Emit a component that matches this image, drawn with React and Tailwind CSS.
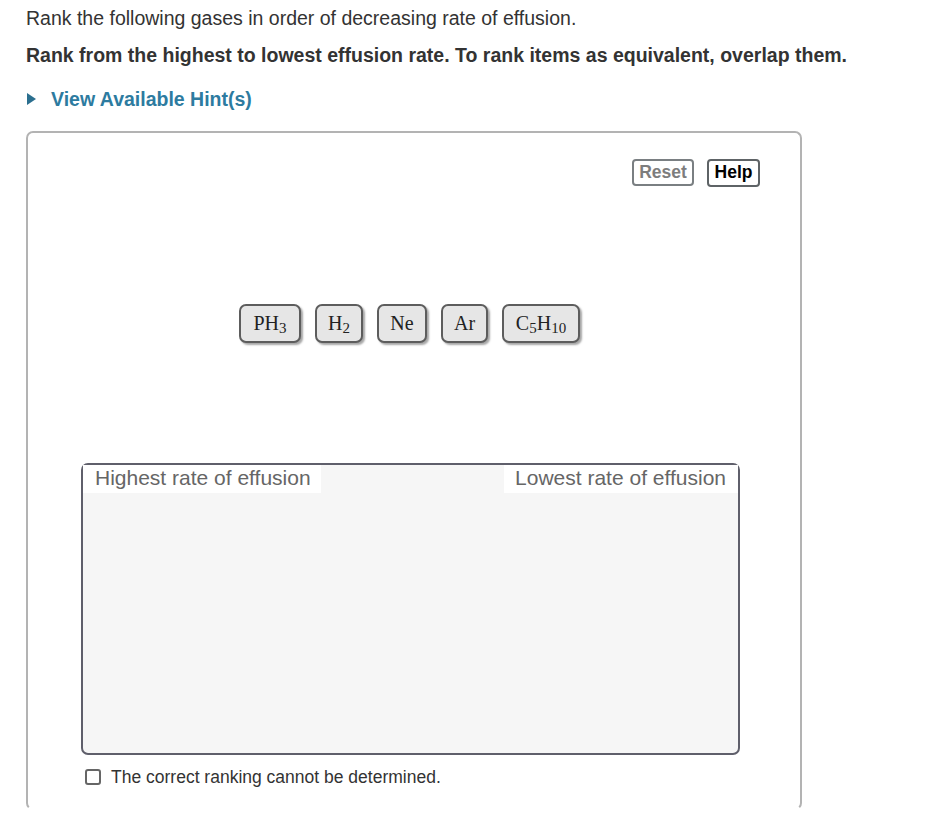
import React from 'react';

const Sub = ({ children }) => (
  <span className="relative top-[3px] text-[15px]">{children}</span>
);

const gases = [
  { key: 'ph3', w: 'w-[62px]', label: <>PH<Sub>3</Sub></> },
  { key: 'h2', w: 'w-[48px]', label: <>H<Sub>2</Sub></> },
  { key: 'ne', w: 'w-[50px]', label: <>Ne</> },
  { key: 'ar', w: 'w-[47px]', label: <>Ar</> },
  { key: 'c5h10', w: 'w-[78px]', label: <>C<Sub>5</Sub>H<Sub>10</Sub></> },
];

const Tile = ({ gas }) => (
  <div
    className={`${gas.w} h-[39px] flex items-center justify-center rounded-[7px] border-2 border-[#5d5d5d] bg-[#e6e6e6] text-[20px] text-[#222] shadow-[2px_2px_2px_rgba(0,0,0,0.35)] font-['Liberation_Serif',serif] leading-none`}
  >
    <span className="-mt-[2px]">{gas.label}</span>
  </div>
);

const App = () => {
  return (
    <div className="w-[948px] h-[818px] overflow-hidden bg-white font-['Liberation_Sans',Arial,sans-serif] text-[#333]">
      <div className="pl-[26px] pt-[7px]">
        <p className="text-[19.5px] leading-[22px]">Rank the following gases in order of decreasing rate of effusion.</p>
        <p className="mt-[15px] text-[19.5px] leading-[22px] font-bold">
          Rank from the highest to lowest effusion rate. To rank items as equivalent, overlap them.
        </p>
        <div className="mt-[22px] flex items-center gap-[15px] text-[#2d7ba0] text-[19.5px] leading-[22px] font-bold">
          <svg width="9" height="12" viewBox="0 0 9 12" className="ml-[1px]">
            <path d="M0 0 L9 6 L0 12 Z" fill="#2b6f8f" />
          </svg>
          <span>View Available Hint(s)</span>
        </div>

        <div className="mt-[21px] w-[776px] h-[679px] border-2 border-[#b3b3b3] border-b-transparent rounded-[7px] flex flex-col">
          <div className="flex justify-end gap-[13px] pt-[26px] pr-[40px]">
            <button className="w-[62px] h-[27px] border-2 border-[#7a7f82] rounded-[4px] text-[17.5px] font-bold text-[#7d7d7d] leading-none">
              Reset
            </button>
            <button className="w-[53px] h-[28px] border-2 border-[#5e6366] rounded-[4px] text-[17.5px] font-bold text-black leading-none">
              Help
            </button>
          </div>

          <div className="mt-[117px] ml-[211px] flex gap-[14px]">
            {gases.map((g) => (
              <Tile key={g.key} gas={g} />
            ))}
          </div>

          <div className="mt-[120px] ml-[53px] w-[659px] h-[292px] border-2 border-[#5f5f6b] rounded-[7px] bg-[#f6f6f6] flex justify-between">
            <div className="h-[28px] w-[238px] bg-white pl-[12px] text-[21px] leading-[26px] text-[#666]">
              Highest rate of effusion
            </div>
            <div className="h-[28px] w-[234px] bg-white pr-[12px] text-right text-[21px] leading-[26px] text-[#666]">
              Lowest rate of effusion
            </div>
          </div>

          <label className="mt-[12px] ml-[57px] flex items-center gap-[10px] text-[17.5px] leading-[20px] text-[#333]">
            <span className="w-[16px] h-[16px] border-2 border-[#666] rounded-[3px] bg-white" />
            <span>The correct ranking cannot be determined.</span>
          </label>
        </div>
      </div>
    </div>
  );
};

export default App;
